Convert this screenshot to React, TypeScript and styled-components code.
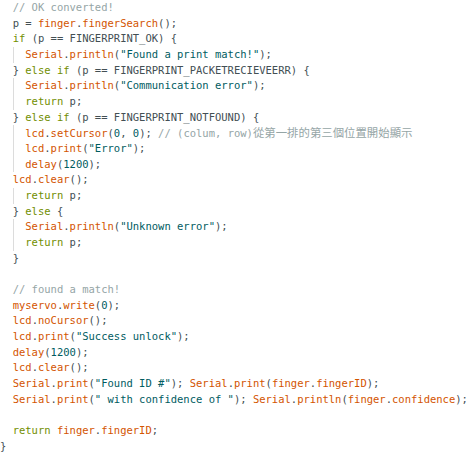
import React from "react";
import styled, { createGlobalStyle } from "styled-components";

const Global = createGlobalStyle`
  html, body { margin: 0; padding: 0; background: #ffffff; }
`;

type Kind = "plain" | "fn" | "kw" | "str" | "num" | "cmt" | "cjk";

const colors: Record<Kind, string> = {
  plain: "#434f54",
  fn: "#d35400",
  kw: "#728e00",
  str: "#005c5f",
  num: "#005c5f",
  cmt: "#95a5a6",
  cjk: "#95a5a6",
};

const Code = styled.div`
  width: 474px;
  height: 455px;
  overflow: hidden;
  background: #ffffff;
  padding: 0 0 0 0;
  box-sizing: border-box;
  font-family: "DejaVu Sans Mono", "Liberation Mono", monospace;
  font-size: 10.5px;
  line-height: 15.68px;
  display: flex;
  flex-direction: column;
`;

const Line = styled.div<{ $guide: boolean }>`
  height: 15.68px;
  white-space: pre;
  background: ${(p) =>
    p.$guide
      ? "linear-gradient(#dcdcdc, #dcdcdc) no-repeat 13px 0 / 1px 100%"
      : "none"};
`;

const Tok = styled.span<{ $kind: Kind }>`
  color: ${(p) => colors[p.$kind]};
  ${(p) =>
    p.$kind === "cjk"
      ? `font-family: "Noto Sans CJK TC", "Noto Sans CJK SC", sans-serif; font-size: 11.4px;`
      : ""}
`;

const lines: string[] = [
  "  // OK converted!",
  "  p = finger.fingerSearch();",
  "  if (p == FINGERPRINT_OK) {",
  '    Serial.println("Found a print match!");',
  "  } else if (p == FINGERPRINT_PACKETRECIEVEERR) {",
  '    Serial.println("Communication error");',
  "    return p;",
  "  } else if (p == FINGERPRINT_NOTFOUND) {",
  "    lcd.setCursor(0, 0); // (colum, row)從第一排的第三個位置開始顯示",
  '    lcd.print("Error");',
  "    delay(1200);",
  "  lcd.clear();",
  "    return p;",
  "  } else {",
  '    Serial.println("Unknown error");',
  "    return p;",
  "  }",
  "",
  "  // found a match!",
  "  myservo.write(0);",
  "  lcd.noCursor();",
  '  lcd.print("Success unlock");',
  "  delay(1200);",
  "  lcd.clear();",
  '  Serial.print("Found ID #"); Serial.print(finger.fingerID);',
  '  Serial.print(" with confidence of "); Serial.println(finger.confidence);',
  "",
  "  return finger.fingerID;",
  "}",
];

const guided = new Set([3, 5, 6, 8, 9, 10, 12, 14, 15]);
const keywords = new Set(["if", "else", "return"]);

type T = { k: Kind; t: string };

function tokenize(src: string): T[] {
  const out: T[] = [];
  let i = 0;
  const push = (k: Kind, t: string) => {
    const last = out[out.length - 1];
    if (last && last.k === k) last.t += t;
    else out.push({ k, t });
  };
  while (i < src.length) {
    const c = src[i];
    if (src.startsWith("//", i)) {
      const rest = src.slice(i);
      const m = rest.match(/[\u3000-\u9fff]/);
      if (m && m.index !== undefined) {
        push("cmt", rest.slice(0, m.index));
        push("cjk", rest.slice(m.index));
      } else push("cmt", rest);
      break;
    }
    if (c === '"') {
      const j = src.indexOf('"', i + 1);
      push("str", src.slice(i, j + 1));
      i = j + 1;
      continue;
    }
    if (/[0-9]/.test(c)) {
      let j = i;
      while (j < src.length && /[0-9]/.test(src[j])) j++;
      push("num", src.slice(i, j));
      i = j;
      continue;
    }
    if (/[A-Za-z_]/.test(c)) {
      let j = i;
      while (j < src.length && /[A-Za-z_0-9]/.test(src[j])) j++;
      const w = src.slice(i, j);
      const next = src[j];
      const prev = src[i - 1];
      let k: Kind = "plain";
      if (keywords.has(w)) k = "kw";
      else if (next === "(" || next === "." || prev === ".") k = "fn";
      push(k, w);
      i = j;
      continue;
    }
    push("plain", c);
    i++;
  }
  return out;
}

export default function App() {
  return (
    <>
      <Global />
      <Code>
        {lines.map((l, idx) => (
          <Line key={idx} $guide={guided.has(idx)}>
            {l === ""
              ? " "
              : tokenize(l).map((t, j) => (
                  <Tok key={j} $kind={t.k}>
                    {t.t}
                  </Tok>
                ))}
          </Line>
        ))}
      </Code>
    </>
  );
}
